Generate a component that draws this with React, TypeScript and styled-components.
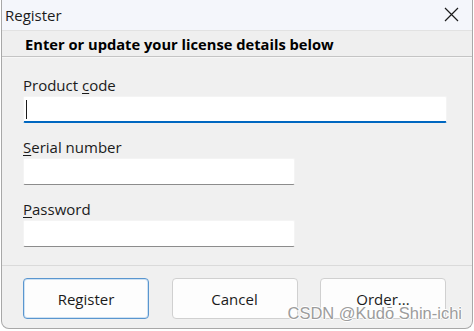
import React from "react";
import styled, { createGlobalStyle } from "styled-components";

const Global = createGlobalStyle`
  html, body { margin: 0; padding: 0; background: #ffffff; }
  body { font-family: "Open Sans", "Noto Sans", sans-serif; color: #1a1a1a; }
`;

const Window = styled.div`
  position: relative;
  width: 472px;
  height: 329px;
  margin-left: 1px;
  box-sizing: border-box;
  border: 1px solid #a8a8a8;
  border-top: none;
  border-radius: 0 0 8px 8px;
  background: #f0f0f0;
  display: flex;
  flex-direction: column;
  overflow: hidden;
`;

const TitleBar = styled.div`
  height: 30px;
  flex: none;
  background: #f4f6fb;
  display: flex;
  align-items: center;
  justify-content: space-between;
  padding: 0 12px 0 3px;
  font-size: 15px;
  color: #1b1b1b;
`;

const CloseButton = styled.button`
  border: none;
  background: transparent;
  padding: 0;
  width: 18px;
  height: 18px;
  display: flex;
  align-items: center;
  justify-content: center;
  margin-bottom: 2px;
`;

const Header = styled.div`
  height: 27px;
  flex: none;
  box-sizing: border-box;
  border-top: 1px solid #e2e2e2;
  border-bottom: 1px solid #c4c4c4;
  background: #efefef;
  display: flex;
  align-items: center;
  padding-left: 23px;
  font-weight: 700;
  font-size: 14.7px;
  color: #000;
`;

const Body = styled.div`
  flex: 1;
  display: flex;
  flex-direction: column;
  gap: 14px;
  padding: 17px 26px 0 21px;
  border-top: 1px solid #f7f7f7;
`;

const Field = styled.label`
  display: flex;
  flex-direction: column;
`;

const LabelText = styled.span`
  font-size: 15px;
  line-height: 21px;
  color: #1b1b1b;
`;

const Key = styled.u`
  text-decoration-thickness: 1px;
  text-underline-offset: 2px;
`;

const Input = styled.div<{ $wide?: boolean; $focused?: boolean }>`
  width: ${(p) => (p.$wide ? "424px" : "272px")};
  height: 27px;
  box-sizing: border-box;
  background: #ffffff;
  border: 1px solid #f4f4f4;
  border-bottom: ${(p) => (p.$focused ? "2px solid #0067c0" : "1px solid #8c8c8c")};
  border-radius: 2px;
  display: flex;
  align-items: center;
  padding-left: 2px;
`;

const Caret = styled.span`
  width: 1px;
  height: 19px;
  background: #1a1a1a;
  margin-top: 1px;
`;

const Footer = styled.div`
  height: 63px;
  flex: none;
  box-sizing: border-box;
  border-top: 1px solid #dadada;
  display: flex;
  justify-content: space-between;
  padding: 12px 26px 0 21px;
`;

const Button = styled.button<{ $default?: boolean }>`
  width: 126px;
  height: 41px;
  box-sizing: border-box;
  background: #fdfdfd;
  border: 1px solid ${(p) => (p.$default ? "#5a96cf" : "#d0d0d0")};
  border-radius: 4px;
  font-family: inherit;
  font-size: 15px;
  color: #1b1b1b;
  padding: 0;
  box-shadow: ${(p) => (p.$default ? "inset 0 0 0 1px #cfe2f3" : "none")};
`;

const Watermark = styled.div`
  position: absolute;
  right: 10px;
  bottom: 5px;
  font-family: "Liberation Sans", Arial, sans-serif;
  font-size: 16.5px;
  color: #9c9c9c;
  text-shadow: -1px 0 #fff, 1px 0 #fff, 0 -1px #fff, 0 1px #fff;
`;

export default function App() {
  return (
    <>
      <Global />
      <Window>
        <TitleBar>
          <span>Register</span>
          <CloseButton aria-label="Close">
            <svg width="15" height="15" viewBox="0 0 15 15">
              <path d="M1 1 L14 14 M14 1 L1 14" stroke="#1b1b1b" strokeWidth="1.2" />
            </svg>
          </CloseButton>
        </TitleBar>
        <Header>Enter or update your license details below</Header>
        <Body>
          <Field>
            <LabelText>
              Product <Key>c</Key>ode
            </LabelText>
            <Input $wide $focused>
              <Caret />
            </Input>
          </Field>
          <Field>
            <LabelText>
              <Key>S</Key>erial number
            </LabelText>
            <Input />
          </Field>
          <Field>
            <LabelText>
              <Key>P</Key>assword
            </LabelText>
            <Input />
          </Field>
        </Body>
        <Footer>
          <Button $default>Register</Button>
          <Button>Cancel</Button>
          <Button>Order...</Button>
        </Footer>
        <Watermark>CSDN @Kudō Shin-ichi</Watermark>
      </Window>
    </>
  );
}
